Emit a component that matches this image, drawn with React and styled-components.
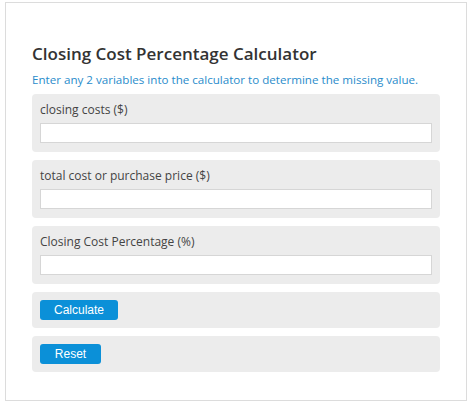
import React from 'react'
import styled, { createGlobalStyle } from 'styled-components'

const fields = [
  'closing costs ($)',
  'total cost or purchase price ($)',
  'Closing Cost Percentage (%)',
]

const App = () => {
  return (
    <>
      <GlobalStyle />
      <Card>
        <Title>Closing Cost Percentage Calculator</Title>
        <Subtitle>Enter any 2 variables into the calculator to determine the missing value.</Subtitle>
        <Form>
          {fields.map(label => (
            <Panel key={label}>
              <Label>{label}</Label>
              <Input type="text" />
            </Panel>
          ))}
          <Panel compact>
            <Button wide>Calculate</Button>
          </Panel>
          <Panel compact>
            <Button>Reset</Button>
          </Panel>
        </Form>
      </Card>
    </>
  )
}

export default App

const GlobalStyle = createGlobalStyle`
body{
  margin:0;
  background:#fff;
  font-family:"Open Sans", sans-serif;
}
`

const Card = styled.div`
box-sizing:border-box;
width:462px;
margin:2px 0 0 5px;
border:1px solid #dcdcdc;
padding:39px 26px 28px 26px;
`

const Title = styled.h2`
margin:0;
font-size:17px;
line-height:24px;
font-weight:600;
color:#333;
`

const Subtitle = styled.div`
margin-top:4px;
font-size:11.6px;
line-height:20px;
color:#2a8ccb;
`

const Form = styled.div`
margin-top:4px;
display:flex;
flex-direction:column;
gap:8px;
`

const Panel = styled.div`
background:#ececec;
border-radius:4px;
padding:${p => (p.compact ? '8px' : '6px 8px 9px')};
display:flex;
flex-direction:column;
align-items:flex-start;
`

const Label = styled.label`
font-size:12px;
line-height:20px;
color:#444;
margin-bottom:3px;
`

const Input = styled.input`
box-sizing:border-box;
width:100%;
height:20px;
margin:0;
border:1px solid #d6d6d6;
background:#fff;
`

const Button = styled.button`
box-sizing:border-box;
height:20px;
width:${p => (p.wide ? '78px' : '61px')};
border:none;
border-radius:3px;
background:#0b90d8;
color:#fff;
font-family:"Liberation Sans", Arial, sans-serif;
font-size:12px;
padding:0;
`
